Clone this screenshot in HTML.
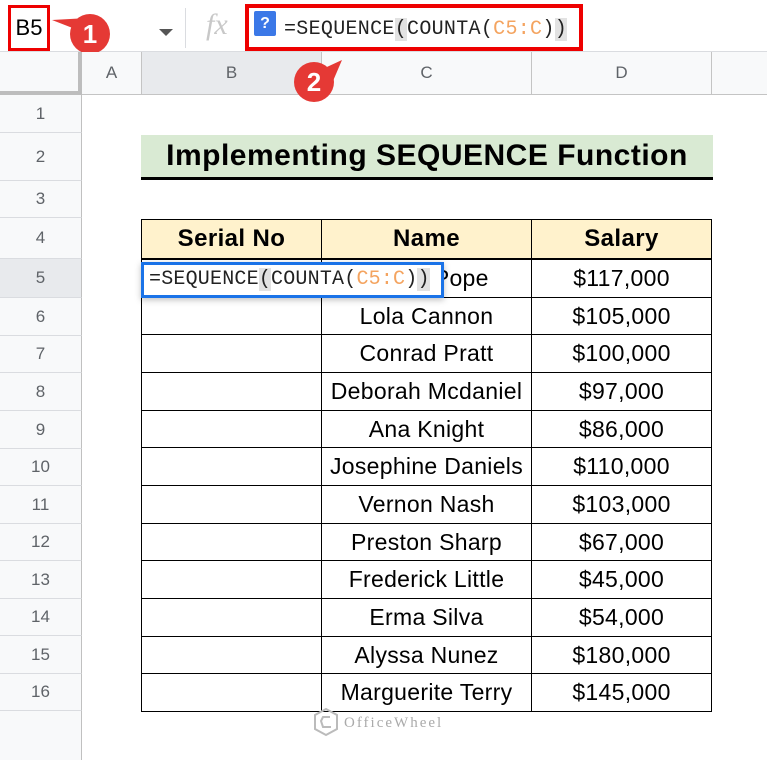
<!DOCTYPE html>
<html><head><meta charset="utf-8"><style>
*{box-sizing:border-box;margin:0;padding:0}
body{width:767px;height:760px;background:#fff;position:relative;overflow:hidden;font-family:"Liberation Sans",Arial,sans-serif}
.a{position:absolute}
.mono{font-family:"Liberation Mono","DejaVu Sans Mono",monospace}
.rh{position:absolute;left:0;width:82px;background:#f8f9fa;border-bottom:1px solid #dadce0;border-right:1px solid #c0c0c0;color:#5f6368;font-size:17px;text-align:center;display:flex;align-items:center;justify-content:center}
.ch{position:absolute;top:52px;height:43px;background:#f8f9fa;border-right:1px solid #c4c4c4;border-bottom:1px solid #c4c4c4;color:#5f6368;font-size:17px;display:flex;align-items:center;justify-content:center}
.c{position:absolute;display:flex;align-items:center;justify-content:center;font-size:23px;letter-spacing:.3px;color:#000;border:1px solid #000;margin:-1px 0 0 -1px}
.hl{background:#e2e2e2}
.or{color:#f4a460}
</style></head><body>
<!-- toolbar -->
<div class="a" style="left:0;top:0;width:767px;height:52px;border-bottom:1px solid #dadce0"></div>
<div class="a" style="left:8px;top:5px;width:42px;height:46px;border:3px solid #e00;font-size:22px;display:flex;align-items:center;justify-content:center">B5</div>
<svg class="a" style="left:48px;top:12px" width="66" height="44"><path d="M4 8 L40 22 L40 6 Z" fill="#e53935"/><circle cx="42" cy="22" r="20" fill="#e53935"/><text x="42" y="31" font-family="Liberation Sans" font-weight="bold" font-size="26" fill="#fff" text-anchor="middle">1</text></svg>
<svg class="a" style="left:158px;top:28px" width="16" height="10"><path d="M1 1 L15 1 L8 8Z" fill="#555"/></svg>
<div class="a" style="left:185px;top:8px;width:1px;height:40px;background:#dadce0"></div>
<div class="a" style="left:206px;top:8px;font-family:'Liberation Serif',serif;font-style:italic;font-size:30px;color:#c8c8c8">fx</div>
<div class="a" style="left:245px;top:4px;width:338px;height:47px;border:4px solid #e00"></div>
<div class="a" style="left:254px;top:11px;width:22px;height:25px;background:#3b78e7;color:#fff;font-weight:bold;font-size:16px;text-align:center;line-height:25px;border-radius:2px">?</div>
<div class="a mono" style="left:284px;top:18px;font-size:20px;letter-spacing:0.3px;color:#222">=SEQUENCE<span class="hl">(</span>COUNTA(<span class="or">C5:C</span>)<span class="hl">)</span></div>
<!-- column headers -->
<div class="a" style="left:0;top:52px;width:82px;height:43px;background:#f8f9fa;border-right:4px solid #bdbdbd;border-bottom:4px solid #bdbdbd"></div>
<div class="ch" style="left:82px;width:60px">A</div>
<div class="ch" style="left:142px;width:180px;background:#e8eaed">B</div>
<div class="ch" style="left:322px;width:210px">C</div>
<div class="ch" style="left:532px;width:180px">D</div>
<div class="ch" style="left:712px;width:60px"></div>
<svg class="a" style="left:290px;top:58px;z-index:5" width="60" height="48"><path d="M52 2 L40 30 L26 14 Z" fill="#e53935"/><circle cx="24" cy="24" r="20" fill="#e53935"/><text x="24" y="33" font-family="Liberation Sans" font-weight="bold" font-size="26" fill="#fff" text-anchor="middle">2</text></svg>
<!-- row headers -->
<div class="rh" style="top:95px;height:38px">1</div>
<div class="rh" style="top:133px;height:48px">2</div>
<div class="rh" style="top:181px;height:37px">3</div>
<div class="rh" style="top:218px;height:41px">4</div>
<div class="rh" style="top:259px;height:39px;background:#e8eaed">5</div>
<div class="rh" style="top:298px;height:38px">6</div>
<div class="rh" style="top:336px;height:37px">7</div>
<div class="rh" style="top:373px;height:38px">8</div>
<div class="rh" style="top:411px;height:38px">9</div>
<div class="rh" style="top:449px;height:37px">10</div>
<div class="rh" style="top:486px;height:38px">11</div>
<div class="rh" style="top:524px;height:37px">12</div>
<div class="rh" style="top:561px;height:38px">13</div>
<div class="rh" style="top:599px;height:37px">14</div>
<div class="rh" style="top:636px;height:38px">15</div>
<div class="rh" style="top:674px;height:37px">16</div>
<div class="rh" style="top:711px;height:49px;border-bottom:none"></div>
<!-- title -->
<div class="a" style="left:141px;top:135px;width:572px;height:45px;background:#d9ead3;border-bottom:3px solid #000;font-weight:bold;font-size:30px;letter-spacing:0.5px;display:flex;align-items:center;justify-content:center">Implementing SEQUENCE Function</div>
<!-- table -->
<div class="c" style="left:142px;top:220px;width:181px;height:40px;background:#fff2cc;font-weight:bold;font-size:24px;letter-spacing:.4px">Serial No</div>
<div class="c" style="left:322px;top:220px;width:211px;height:40px;background:#fff2cc;font-weight:bold;font-size:24px;letter-spacing:.4px">Name</div>
<div class="c" style="left:532px;top:220px;width:181px;height:40px;background:#fff2cc;font-weight:bold;font-size:24px;letter-spacing:.4px">Salary</div>
<script>
var d=[["Jenny Pope","$117,000"],["Lola Cannon","$105,000"],["Conrad Pratt","$100,000"],["Deborah Mcdaniel","$97,000"],["Ana Knight","$86,000"],["Josephine Daniels","$110,000"],["Vernon Nash","$103,000"],["Preston Sharp","$67,000"],["Frederick Little","$45,000"],["Erma Silva","$54,000"],["Alyssa Nunez","$180,000"],["Marguerite Terry","$145,000"]];
var h="";for(var i=0;i<12;i++){var y=Math.round(260+i*37.65),y2=Math.round(260+(i+1)*37.65),hh=y2-y+1;
h+='<div class="c" style="left:142px;top:'+y+'px;width:181px;height:'+hh+'px"></div>';
h+='<div class="c" style="left:322px;top:'+y+'px;width:211px;height:'+hh+'px">'+d[i][0]+'</div>';
h+='<div class="c" style="left:532px;top:'+y+'px;width:181px;height:'+hh+'px">'+d[i][1]+'</div>';}
document.write(h);
</script>
<!-- edit box -->
<div class="a mono" style="left:141px;top:262px;width:303px;height:36px;background:#fff;border:3px solid #1a73e8;box-shadow:0 2px 6px rgba(0,0,0,.25);font-size:20px;letter-spacing:0.2px;color:#222;padding-left:5px;line-height:30px;white-space:nowrap;overflow:hidden">=SEQUENCE<span class="hl">(</span>COUNTA(<span class="or">C5:C</span>)<span class="hl">)</span></div>
<!-- watermark -->
<svg class="a" style="left:312px;top:705px" width="150" height="34"><path d="M14 4 L25 10 L25 24 L14 30 L3 24 L3 10 Z" fill="none" stroke="#bbb" stroke-width="2"/><path d="M18 12 L11 12 L9 16 L11 22 L19 22" fill="none" stroke="#bbb" stroke-width="2"/><text x="32" y="22" font-family="Liberation Serif" font-size="15" letter-spacing="2" fill="#aaa">OfficeWheel</text></svg>
</body></html>
